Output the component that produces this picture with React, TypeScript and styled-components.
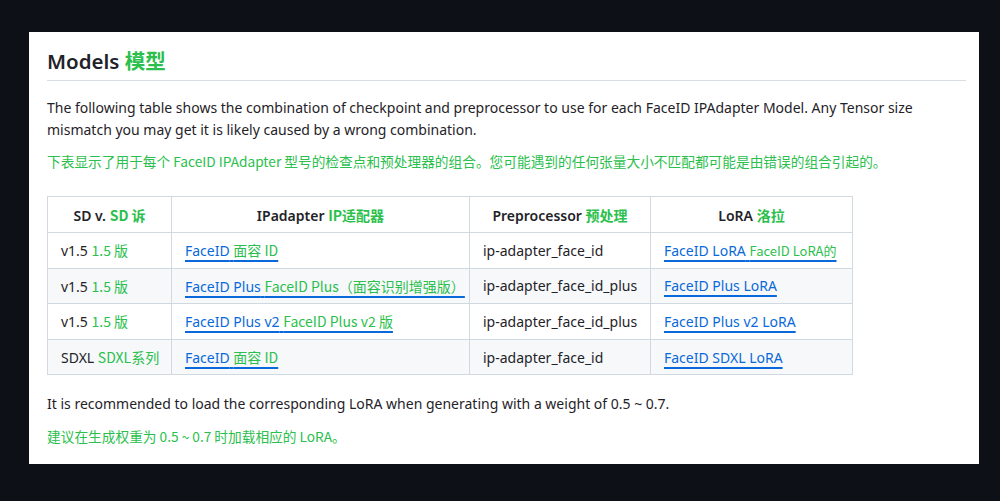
import React from "react";
import styled, { createGlobalStyle } from "styled-components";

const Global = createGlobalStyle`
  html, body { margin: 0; padding: 0; background: #0d1117; }
  body { font-family: "Noto Sans", "Noto Sans CJK SC", sans-serif; }
`;

const Page = styled.div`
  width: 1000px;
  height: 501px;
  box-sizing: border-box;
  padding: 32px 21px 0 29px;
  background: #0d1117;
`;

const Panel = styled.div`
  background: #ffffff;
  height: 432px;
  box-sizing: border-box;
  padding: 12px 13px 0 18px;
  color: #1f2328;
  font-size: 14px;
`;

const Heading = styled.h2`
  margin: 0;
  font-size: 20.5px;
  font-weight: 600;
  line-height: 32px;
  padding-bottom: 3px;
  border-bottom: 1px solid #d8dee4;
  color: #1f2328;
`;

const Tr = styled.span<{ $bold?: boolean; $small?: boolean }>`
  color: #2bc04d;
  font-family: "Noto Sans CJK SC", "Noto Sans", sans-serif;
  font-weight: ${(p) => (p.$bold ? 700 : 400)};
  font-size: ${(p) => (p.$small ? "13px" : "inherit")};
`;

const Para = styled.p<{ $top?: number }>`
  margin: ${(p) => p.$top ?? 0}px 0 0 0;
  line-height: 22px;
`;

const GreenPara = styled.p<{ $top?: number }>`
  margin: ${(p) => p.$top ?? 0}px 0 0 0;
  line-height: 22px;
  color: #2bc04d;
  font-family: "Noto Sans CJK SC", "Noto Sans", sans-serif;
  font-size: 13.7px;
`;

const Table = styled.table`
  margin-top: 24px;
  border-collapse: collapse;
  table-layout: fixed;
  width: 805px;
  font-size: 14px;
`;

const Th = styled.th<{ $w: number }>`
  width: ${(p) => p.$w}px;
  box-sizing: border-box;
  height: 36px;
  padding: 0 13px;
  border: 1px solid #d1d9e0;
  font-weight: 600;
  text-align: center;
  white-space: nowrap;
`;

const Row = styled.tr<{ $striped?: boolean }>`
  background: ${(p) => (p.$striped ? "#f6f8fa" : "#ffffff")};
`;

const Td = styled.td`
  height: 35.6px;
  box-sizing: border-box;
  padding: 0 13px;
  border: 1px solid #d1d9e0;
  white-space: nowrap;
`;

const Link = styled.a`
  color: #0969da;
  text-decoration: underline;
  text-decoration-color: #0969da;
  text-decoration-thickness: 2px;
  text-underline-offset: 4px;
`;

const rows = [
  { sd: "v1.5", sdT: "1.5 版", link: "FaceID", linkT: "面容 ID", pre: "ip-adapter_face_id", lora: "FaceID LoRA", loraT: "FaceID LoRA的" },
  { sd: "v1.5", sdT: "1.5 版", link: "FaceID Plus", linkT: "FaceID Plus（面容识别增强版）", pre: "ip-adapter_face_id_plus", lora: "FaceID Plus LoRA", loraT: "" },
  { sd: "v1.5", sdT: "1.5 版", link: "FaceID Plus v2", linkT: "FaceID Plus v2 版", pre: "ip-adapter_face_id_plus", lora: "FaceID Plus v2 LoRA", loraT: "" },
  { sd: "SDXL", sdT: "SDXL系列", link: "FaceID", linkT: "面容 ID", pre: "ip-adapter_face_id", lora: "FaceID SDXL LoRA", loraT: "" },
];

export default function App() {
  return (
    <>
      <Global />
      <Page>
        <Panel>
          <Heading>
            Models <Tr $bold>模型</Tr>
          </Heading>
          <Para $top={16}>
            The following table shows the combination of checkpoint and preprocessor to use for each FaceID IPAdapter Model. Any Tensor size mismatch you may get it is likely caused by a wrong combination.
          </Para>
          <GreenPara $top={9}>
            下表显示了用于每个 FaceID IPAdapter 型号的检查点和预处理器的组合。您可能遇到的任何张量大小不匹配都可能是由错误的组合引起的。
          </GreenPara>
          <Table>
            <thead>
              <tr>
                <Th $w={124}>
                  SD v. <Tr $bold>SD 诉</Tr>
                </Th>
                <Th $w={298}>
                  IPadapter <Tr $bold>IP适配器</Tr>
                </Th>
                <Th $w={181}>
                  Preprocessor <Tr $bold>预处理</Tr>
                </Th>
                <Th $w={202}>
                  LoRA <Tr $bold>洛拉</Tr>
                </Th>
              </tr>
            </thead>
            <tbody>
              {rows.map((r, i) => (
                <Row key={i} $striped={i % 2 === 1}>
                  <Td>
                    {r.sd} <Tr>{r.sdT}</Tr>
                  </Td>
                  <Td>
                    <Link href="#">
                      {r.link} <Tr>{r.linkT}</Tr>
                    </Link>
                  </Td>
                  <Td>{r.pre}</Td>
                  <Td>
                    <Link href="#">
                      {r.lora}
                      {r.loraT && (
                        <>
                          {" "}
                          <Tr $small>{r.loraT}</Tr>
                        </>
                      )}
                    </Link>
                  </Td>
                </Row>
              ))}
            </tbody>
          </Table>
          <Para $top={18}>
            It is recommended to load the corresponding LoRA when generating with a weight of 0.5 ~ 0.7.
          </Para>
          <GreenPara $top={10}>建议在生成权重为 0.5 ~ 0.7 时加载相应的 LoRA。</GreenPara>
        </Panel>
      </Page>
    </>
  );
}
